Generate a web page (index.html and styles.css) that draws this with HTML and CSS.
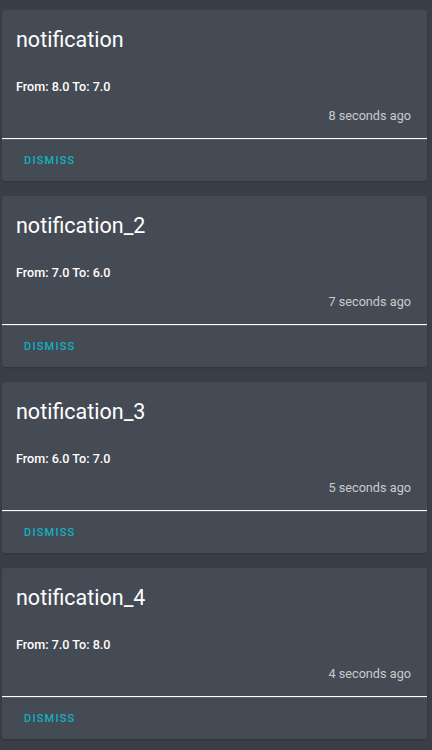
FILE: index.html
```html
<!DOCTYPE html>
<html lang="en">
<head>
  <meta charset="UTF-8"/><meta name="viewport" content="width=device-width, initial-scale=1.0"/>
  <title>Notifications</title>
  <link rel="stylesheet" href="styles.css">
</head>
<body>
  <div class="list">
    <div class="card">
      <div class="content">
        <div class="title">notification</div>
        <div class="message">From: 8.0 To: 7.0</div>
        <div class="time">8 seconds ago</div>
      </div>
      <div class="actions"><button>Dismiss</button></div>
    </div>
    <div class="card">
      <div class="content">
        <div class="title">notification_2</div>
        <div class="message">From: 7.0 To: 6.0</div>
        <div class="time">7 seconds ago</div>
      </div>
      <div class="actions"><button>Dismiss</button></div>
    </div>
    <div class="card">
      <div class="content">
        <div class="title">notification_3</div>
        <div class="message">From: 6.0 To: 7.0</div>
        <div class="time">5 seconds ago</div>
      </div>
      <div class="actions"><button>Dismiss</button></div>
    </div>
    <div class="card">
      <div class="content">
        <div class="title">notification_4</div>
        <div class="message">From: 7.0 To: 8.0</div>
        <div class="time">4 seconds ago</div>
      </div>
      <div class="actions"><button>Dismiss</button></div>
    </div>
  </div>
</body>
</html>
```

FILE: styles.css
```css
body{margin:0;font-family:Roboto,"Liberation Sans",sans-serif;background:#3a3e46;color:#fff;}
.list{display:flex;flex-direction:column;gap:15px;padding:10px 5px 10px 2px;}
.card{background:#454b54;border-radius:3px;box-shadow:0 1px 2px rgba(0,0,0,0.15);}
.content{padding:15px 16px 12px 14px;}
.title{font-size:21.5px;line-height:29px;}
.message{font-size:12.6px;line-height:20px;font-weight:500;margin-top:23px;}
.time{font-size:12.7px;line-height:20px;color:#c9cbce;text-align:right;margin-top:9px;}
.actions{border-top:1px solid #fff;box-shadow:inset 0 1px 0 #5b6068;height:42px;display:flex;align-items:center;padding-left:14px;}
button{background:none;border:none;color:#0fb2c0;font-family:inherit;font-size:11px;font-weight:500;letter-spacing:1.2px;text-transform:uppercase;padding:5px 8px 4px;cursor:pointer;}
```
